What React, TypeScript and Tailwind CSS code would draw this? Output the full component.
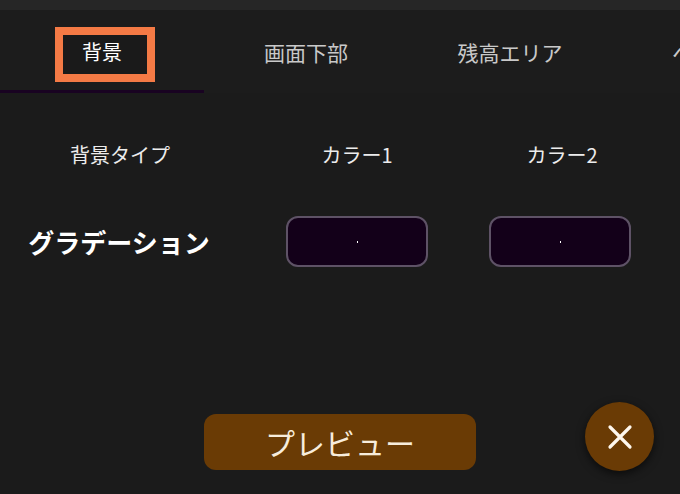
import React from "react";

const tabs = ["背景", "画面下部", "残高エリア", "ヘッダー"];

function ColorSwatch() {
  return (
    <div className="flex h-[51px] w-[142px] items-center justify-center rounded-[12px] border-2 border-[#5e5266] bg-[#130019]">
      <span className="block h-[2px] w-[1px] bg-white" />
    </div>
  );
}

export default function App() {
  return (
    <div
      className="relative h-[494px] w-[680px] overflow-hidden bg-[#1b1b1b] text-white"
      style={{ fontFamily: '"Noto Sans CJK JP", "Noto Sans", sans-serif' }}
    >
      <div className="h-[10px] bg-[#262626]" />
      {/* tab strip */}
      <div className="flex h-[83px] bg-[#1c1c1c]">
        {tabs.map((t, i) => (
          <div key={t} className="relative flex w-[204px] shrink-0 items-center justify-center">
            {i === 0 ? (
              <div className="ml-[6px] mt-[5px] flex h-[55px] w-[100px] items-center justify-center border-[8px] border-[#f47a45] bg-[#1a1a1a]">
                <span className="ml-[-6px] mt-[-5px] text-[20px] leading-none text-white">{t}</span>
              </div>
            ) : (
              <span className="mt-[1px] text-[21px] leading-none text-[#c9c9c9]">{t}</span>
            )}
            {i === 0 && <div className="absolute bottom-0 left-0 h-[3px] w-[204px] bg-[#190322]" />}
          </div>
        ))}
      </div>

      {/* settings row */}
      <div className="mt-[52px] flex text-[20px] leading-none text-[#ececec]">
        <div className="flex w-[240px] justify-center">背景タイプ</div>
        <div className="flex w-[234px] justify-center">カラー1</div>
        <div className="flex w-[176px] justify-center">カラー2</div>
      </div>
      <div className="mt-[51px] flex items-center">
        <div className="flex w-[238px] justify-center text-[26px] font-bold leading-none text-white">
          グラデーション
        </div>
        <div className="flex w-[238px] justify-center">
          <ColorSwatch />
        </div>
        <div className="flex w-[168px] justify-center">
          <ColorSwatch />
        </div>
      </div>

      {/* bottom actions */}
      <div className="absolute left-[204px] top-[414px] flex h-[56px] w-[272px] items-center justify-center rounded-[12px] bg-[#6a3b05]">
        <span className="text-[30px] leading-none text-[#f7ecdc]">プレビュー</span>
      </div>
      <div className="absolute left-[585px] top-[402px] flex h-[69px] w-[69px] items-center justify-center rounded-full bg-[#6a3b05] shadow-[0_3px_8px_rgba(0,0,0,0.6)]">
        <svg width="26" height="26" viewBox="0 0 26 26" fill="none" stroke="#fff8ee" strokeWidth="3.2" strokeLinecap="round">
          <path d="M3 3 L23 23 M23 3 L3 23" />
        </svg>
      </div>
    </div>
  );
}
